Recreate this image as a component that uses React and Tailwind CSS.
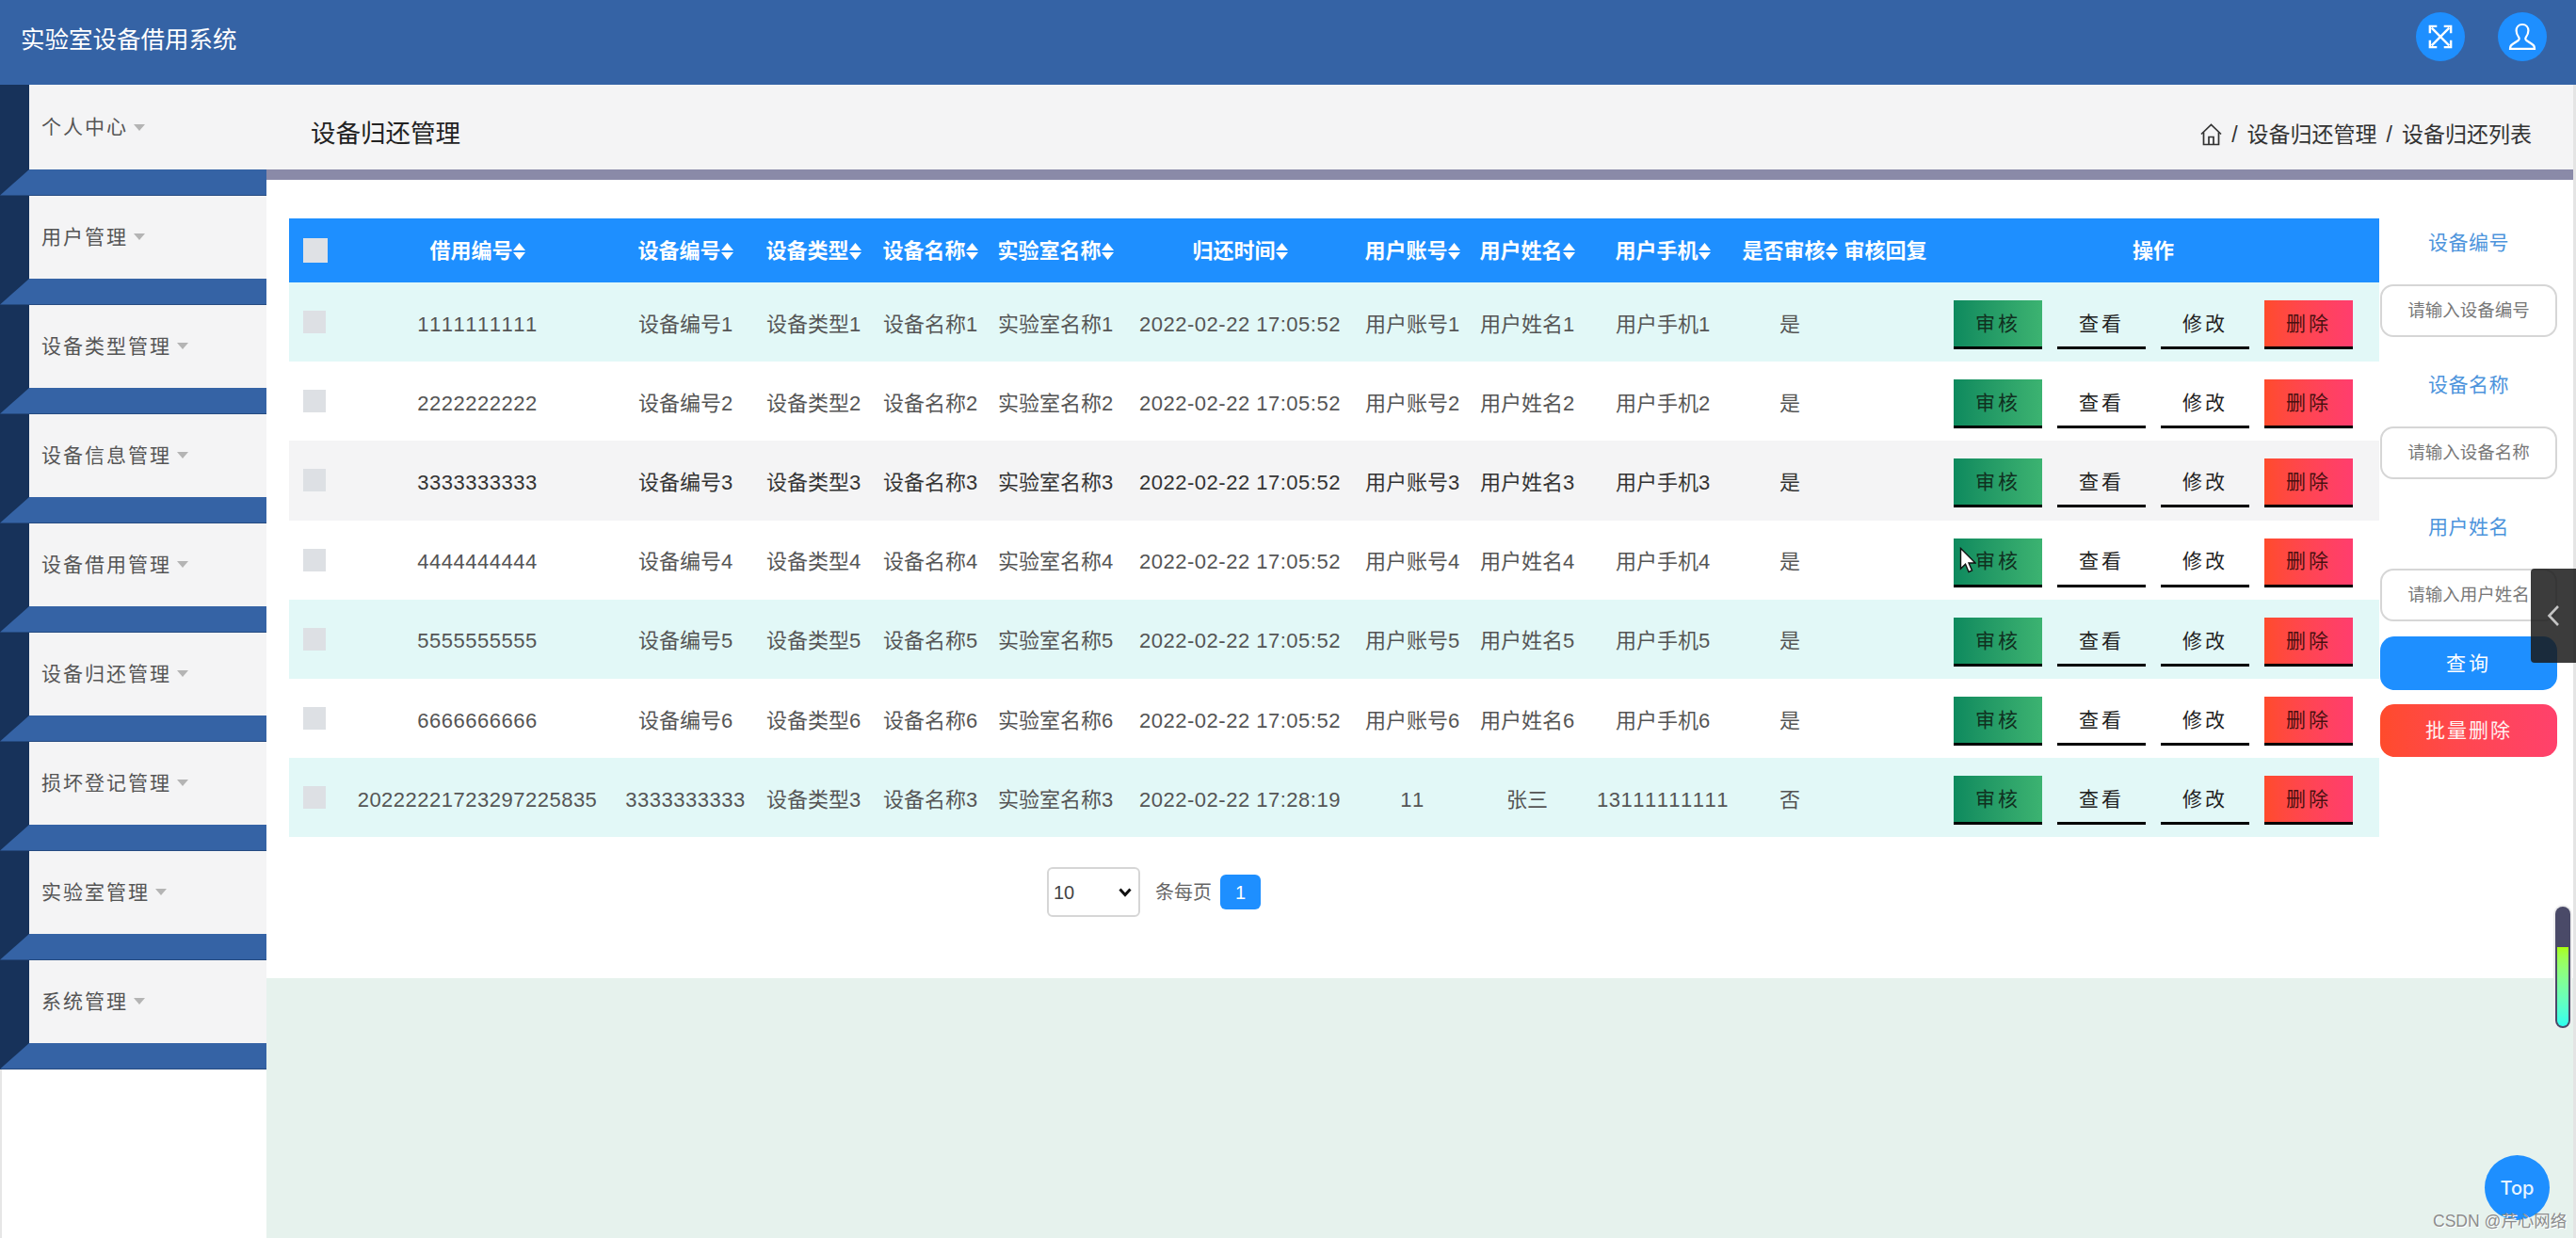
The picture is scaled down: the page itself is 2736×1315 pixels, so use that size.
const FONT = "font-['Liberation_Sans','Noto_Sans_CJK_SC',sans-serif]"

const menus = ['个人中心', '用户管理', '设备类型管理', '设备信息管理', '设备借用管理', '设备归还管理', '损坏登记管理', '实验室管理', '系统管理']

const rows = [
  { no: '1111111111', n: '1', bg: 'bg-[#e2f8f7]' },
  { no: '2222222222', n: '2', bg: 'bg-white' },
  { no: '3333333333', n: '3', bg: 'bg-[#f4f4f5]', dark: true },
  { no: '4444444444', n: '4', bg: 'bg-white' },
  { no: '5555555555', n: '5', bg: 'bg-[#e2f8f7]' },
  { no: '6666666666', n: '6', bg: 'bg-white' },
]

const colWidths = ['w-[55px]', 'w-[290px]', 'w-[152px]', 'w-[120px]', 'w-[128px]', 'w-[138px]', 'w-[254px]', 'w-[112px]', 'w-[132px]', 'w-[156px]', 'w-[114px]', 'w-[89px]', 'w-[480px]']

function SortIcon() {
  return (
    <svg width="13" height="18" viewBox="0 0 13 18" className="inline-block align-[-2px]" fill="#fff">
      <path d="M6.500 0 13 8H0z" />
      <path d="M6.500 18 0 10H13z" />
    </svg>
  )
}

function Th({ children, sort = true }) {
  return (
    <th className="p-0 text-center whitespace-nowrap font-bold text-white">
      {children}
      {sort && <SortIcon />}
    </th>
  )
}

function RowButtons() {
  return (
    <div className="flex justify-center gap-4 pt-[6px] text-[21px] tracking-[3px] text-[#222]">
      <button className="w-[94px] h-[52px] border-b-[3px] border-black bg-linear-to-r from-[#0c8a5e] to-[#3cb371] text-[#10301f]">审核</button>
      <button className="w-[94px] h-[52px] border-b-[3px] border-black">查看</button>
      <button className="w-[94px] h-[52px] border-b-[3px] border-black">修改</button>
      <button className="w-[94px] h-[52px] border-b-[3px] border-black bg-linear-to-r from-[#ff4b2b] to-[#ff3d6e] text-[#4a1010]">删除</button>
    </div>
  )
}

function Row({ row }) {
  const { cells, bg, dark } = row
  return (
    <tr className={`h-[84.2px] ${bg} ${dark ? 'text-[#333]' : 'text-[#555]'}`}>
      <td className="p-0 pl-[15px]">
        <div className="w-6 h-6 bg-[#dde0e4]" />
      </td>
      {cells.map((c, i) => (
        <td key={i} className={`p-0 pt-[4px] text-center whitespace-nowrap ${/^[\d\s:-]+$/.test(c) ? 'tracking-[0.5px] [font-kerning:none]' : ''}`}>{c}</td>
      ))}
      <td className="p-0"></td>
      <td className="p-0">
        <RowButtons />
      </td>
    </tr>
  )
}

function SearchField({ label, placeholder, last }) {
  return (
    <div className={last ? 'mb-4' : 'mb-[25px]'}>
      <div className="h-[52px] leading-[52px] mb-[18px] text-center text-[21px] tracking-[0.5px] text-[#4d94dc]">{label}</div>
      <input
        placeholder={placeholder}
        className="w-[188px] h-[56px] border-2 border-[#d6d6d6] rounded-[14px] bg-white text-center text-[18.5px] outline-none placeholder:text-[#777]"
      />
    </div>
  )
}

export default function App() {
  const tableRows = [
    ...rows.map((r) => ({
      ...r,
      cells: [r.no, `设备编号${r.n}`, `设备类型${r.n}`, `设备名称${r.n}`, `实验室名称${r.n}`, '2022-02-22 17:05:52', `用户账号${r.n}`, `用户姓名${r.n}`, `用户手机${r.n}`, '是'],
    })),
    {
      bg: 'bg-[#e2f8f7]',
      cells: ['20222221723297225835', '3333333333', '设备类型3', '设备名称3', '实验室名称3', '2022-02-22 17:28:19', '11', '张三', '13111111111', '否'],
    },
  ]

  return (
    <div className={`relative w-[2736px] h-[1315px] overflow-hidden bg-white flex flex-col ${FONT}`}>
      {/* top bar */}
      <header className="h-[90px] shrink-0 bg-[#3563a5] flex items-center justify-between pl-[22px] pr-[31px] pb-[6px]">
        <div className="text-[25.500px] text-white">实验室设备借用系统</div>
        <div className="flex gap-[35px] mt-[-6px]">
          <div className="w-[52px] h-[52px] rounded-full bg-[#1e8fff] flex items-center justify-center">
            <svg width="26" height="26" viewBox="0 0 28 28" fill="none" stroke="#fff" strokeWidth="2.600">
              <path d="M4 4 24 24M24 4 4 24" />
              <path d="M2 10V2h8M18 2h8v8M26 18v8h-8M10 26H2v-8" />
            </svg>
          </div>
          <div className="w-[52px] h-[52px] rounded-full bg-[#1e8fff] flex items-center justify-center">
            <svg width="30" height="30" viewBox="0 0 30 30" fill="none" stroke="#fff" strokeWidth="2.200">
              <path d="M15 2c-4 0-6.400 3-6.400 6.600 0 3 1.200 5.200 2.600 7 .8 1.100.6 2.700-.6 3.400L4.500 23c-1.700 1-2.500 2.400-2.500 4.800h26c0-2.400-.8-3.800-2.500-4.800l-6.100-4c-1.200-.7-1.400-2.300-.6-3.400 1.400-1.800 2.600-4 2.600-7C21.400 5 19 2 15 2z" />
            </svg>
          </div>
        </div>
      </header>

      <div className="flex flex-1 min-h-0">
        {/* sidebar */}
        <aside className="w-[283px] shrink-0 border-l-2 border-[#e6e6e6]">
          <div className="ml-[-2px]">
            {menus.map((m, i) => (
              <div key={m}>
                <div className={`flex bg-[#17325a] pl-[31px] ${i === 0 ? 'h-[90px]' : 'h-[88.5px]'}`}>
                  <div className="flex-1 bg-[#f4f4f5] flex items-center pl-[13px] text-[21px] tracking-[2px] text-[#555]">
                    {m}
                    <span className="ml-[6px] w-0 h-0 border-x-[6px] border-x-transparent border-t-[7px] border-t-[#b4b4b4]" />
                  </div>
                </div>
                <div className="h-[27.5px] bg-[#17325a]">
                  <div className="h-full bg-[#3563a5] [clip-path:polygon(31px_0,100%_0,100%_100%,0_100%)]" />
                </div>
              </div>
            ))}
          </div>
        </aside>

        {/* main */}
        <main className="flex-1 min-w-0 flex flex-col border-r-[3px] border-[#e4e4e4]">
          <div className="h-[90px] shrink-0 bg-[#f4f4f5] flex items-center justify-between pl-[47px] pr-[44px] pt-[16px]">
            <h1 className="text-[26.5px] text-[#222]">设备归还管理</h1>
            <div className="flex items-center text-[23px] text-[#333]">
              <svg width="23" height="24" viewBox="0 0 23 24" fill="none" stroke="#333" strokeWidth="1.700">
                <path d="M1 11.500 11.500 1.500 22 11.500" />
                <path d="M3.500 9.500V22.500H19.500V9.500" />
                <path d="M9 22.500V14.500H14V22.500" />
              </svg>
              <span className="ml-[10px] mr-[10px]">/</span>
              <span>设备归还管理</span>
              <span className="mx-[10px]">/</span>
              <span>设备归还列表</span>
            </div>
          </div>
          <div className="h-[11px] shrink-0 bg-[#8a8aa8]" />

          <div className="h-[848px] shrink-0 bg-white pl-[24px] pt-[41px]">
            <div className="flex">
              <div>
                <table className="w-[2220px] table-fixed text-[22px]">
                  <colgroup>
                    {colWidths.map((w, i) => (
                      <col key={i} className={w} />
                    ))}
                  </colgroup>
                  <thead>
                    <tr className="h-[68px] bg-[#1e8fff]">
                      <th className="p-0 pl-[15px]">
                        <div className="w-[26px] h-[26px] bg-[#dfe1e5]" />
                      </th>
                      <Th>借用编号</Th>
                      <Th>设备编号</Th>
                      <Th>设备类型</Th>
                      <Th>设备名称</Th>
                      <Th>实验室名称</Th>
                      <Th>归还时间</Th>
                      <Th>用户账号</Th>
                      <Th>用户姓名</Th>
                      <Th>用户手机</Th>
                      <Th>是否审核</Th>
                      <Th sort={false}>审核回复</Th>
                      <Th sort={false}>操作</Th>
                    </tr>
                  </thead>
                  <tbody>
                    {tableRows.map((r, i) => (
                      <Row key={i} row={r} />
                    ))}
                  </tbody>
                </table>

                {/* pagination */}
                <div className="flex items-center mt-[32px] ml-[805px] text-[20px] text-[#666]">
                  <div className="relative w-[99px] h-[53px]">
                    <select defaultValue="10" className="appearance-none w-full h-full pl-[5px] border-2 border-[#d6d6d6] rounded-[6px] bg-white text-[20px] text-[#444] [font-kerning:none]">
                      <option value="10">10</option>
                    </select>
                    <svg className="absolute left-[76px] top-[22px]" width="14" height="10" viewBox="0 0 14 10" fill="none" stroke="#111" strokeWidth="3">
                      <path d="M1.500 1.500 7 7.500 12.500 1.500" />
                    </svg>
                  </div>
                  <span className="ml-[16px]">条每页</span>
                  <span className="ml-[9px] w-[43px] h-[37px] rounded-[6px] bg-[#1e8fff] text-white flex items-center justify-center">1</span>
                </div>
              </div>

              {/* search panel */}
              <div className="w-[188px] ml-[1px]">
                <SearchField label="设备编号" placeholder="请输入设备编号" />
                <SearchField label="设备名称" placeholder="请输入设备名称" />
                <SearchField label="用户姓名" placeholder="请输入用户姓名" last />
                <button className="block w-[188px] h-[57px] rounded-[15px] bg-[#1e8fff] text-white text-[21px] tracking-[3px]">查询</button>
                <button className="block w-[188px] h-[56px] mt-[15px] rounded-[15px] bg-linear-to-r from-[#ff4b2b] to-[#ff416c] text-[#fff0f0] text-[21px] tracking-[2px]">批量删除</button>
              </div>
            </div>
          </div>

          <div className="flex-1 bg-[#e6f2ed]" />
        </main>
      </div>

      {/* overlays */}
      <div className="absolute left-[2688px] top-[604px] w-[48px] h-[100px] rounded-l-[4px] bg-[#1a1a1a]/85 flex items-center justify-center">
        <svg width="14" height="24" viewBox="0 0 14 24" fill="none" stroke="#c4c4c4" strokeWidth="2.600">
          <path d="M12 2 2.500 12 12 22" />
        </svg>
      </div>

      <div className="absolute left-[2714px] top-[963px] w-4 h-[129px] rounded-full bg-[#4a4a68] ring-2 ring-[#eeeeee] px-[2px] pb-[2px] pt-[43px]">
        <div className="h-full rounded-b-full bg-linear-to-b from-[#a8ff00] to-[#2bffee]" />
      </div>

      <div className="absolute left-[2639px] top-[1227px] w-[69px] h-[69px] rounded-full bg-[#1e8fff] flex items-center justify-center font-['Inter',sans-serif] text-[20px] font-medium text-[#e8f4ff]">Top</div>

      <div className="absolute left-[2584px] top-[1285px] text-[17.5px] leading-[24px] whitespace-nowrap text-[#8c8c8c] [text-shadow:1px_1px_0_#ffffff]">CSDN @芹心网络</div>

      <svg className="absolute left-[2081px] top-[581px]" width="18" height="28" viewBox="0 0 18 28">
        <path d="M1.500 1.500V23L6.500 18.200 10 26.500 13.500 25 10 17H17z" fill="#fff" stroke="#111" strokeWidth="1.400" />
      </svg>
    </div>
  )
}
